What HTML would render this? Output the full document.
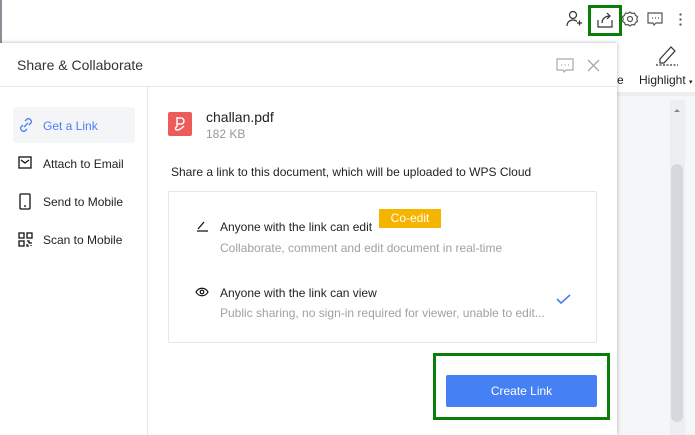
<!DOCTYPE html>
<html><head><style>
*{margin:0;padding:0;box-sizing:border-box}
body{width:695px;height:435px;overflow:hidden;background:#fff;font-family:"Liberation Sans",sans-serif;position:relative;color:#222}
.a{position:absolute}
.t{font-size:12px;white-space:nowrap}
</style></head><body>
<div class="a" style="left:0;top:0;width:695px;height:43px;background:#fff"></div>
<div class="a" style="left:617px;top:96px;width:78px;height:339px;background:#f5f6f8"></div>
<div class="a" style="left:617px;top:92px;width:78px;height:4px;background:#eceef1"></div>
<div class="a" style="left:670px;top:100px;width:15px;height:335px;background:#eceef1"></div>
<div class="a" style="left:671px;top:164px;width:12px;height:258px;background:#d6d8de;border-radius:6px"></div>
<div class="a" style="left:674px;top:109px;width:0;height:0;border-left:3px solid transparent;border-right:3px solid transparent;border-bottom:3px solid #889"></div>
<!-- toolbar icons -->
<svg class="a" style="left:564px;top:9px" width="20" height="20" viewBox="0 0 20 20" fill="none" stroke="#333" stroke-width="1.2"><circle cx="9" cy="6" r="3.5"/><path d="M3 17c0-4 3-6 6-6 1.5 0 3 .5 4 1.5M13 14h5M15.5 11.5v5"/></svg>
<div class="a" style="left:588px;top:5px;width:34px;height:31px;border:3px solid #0a7d0a"></div>
<svg class="a" style="left:594px;top:9px" width="22" height="22" viewBox="0 0 22 22" fill="none" stroke="#333" stroke-width="1.2"><path d="M4 11v7h14v-7M8 14c0-4 3-7 8-7M13 4l3 3-3 3"/></svg>
<svg class="a" style="left:621px;top:10px" width="18" height="18" viewBox="0 0 18 18" fill="none" stroke="#555" stroke-width="1.2"><circle cx="9" cy="9" r="2.5"/><path d="M9 2l2 1.5 2.5-.5 1 2.3 2 1.4-.7 2.3.7 2.3-2 1.4-1 2.3-2.5-.5L9 16l-2-1.5-2.5.5-1-2.3-2-1.4.7-2.3-.7-2.3 2-1.4 1-2.3 2.5.5z"/></svg>
<svg class="a" style="left:646px;top:11px" width="18" height="16" viewBox="0 0 18 16" fill="none" stroke="#555" stroke-width="1.2"><path d="M2 2h14v10h-6l-2 2-1-2H2z"/><path d="M6 7h1M9 7h1M12 7h1"/></svg>
<div class="a" style="left:679px;top:12px;width:3px;height:14px;background:radial-gradient(circle,#555 1px,transparent 1.3px) 0 0/3px 5px"></div>
<svg class="a" style="left:654px;top:43px" width="26" height="24" viewBox="0 0 26 24" fill="none" stroke="#333" stroke-width="1.2"><path d="M6 16l11-12 4 4-11 12H6z"/><path d="M2 22h22" stroke-dasharray="2 1.5"/></svg>
<div class="a t" style="left:639px;top:73px;font-size:12px;color:#222">Highlight <span style="font-size:7px">▾</span></div>
<div class="a t" style="left:617px;top:73px">e</div>
<div class="a" style="left:0;top:0;width:2px;height:435px;background:#8a8f98"></div>
<!-- dialog -->
<div class="a" style="left:0;top:43px;width:617px;height:392px;background:#fff;box-shadow:0 0 4px rgba(0,0,0,.3)"></div>
<div class="a t" style="left:17px;top:57px;font-size:14px;color:#333">Share &amp; Collaborate</div>
<svg class="a" style="left:555px;top:57px" width="20" height="18" viewBox="0 0 20 18" fill="none" stroke="#aaa" stroke-width="1.2"><path d="M2 2h16v11h-7l-2 2-1-2H2z"/><path d="M6 8h1M9.5 8h1M13 8h1"/></svg>
<svg class="a" style="left:587px;top:59px" width="13" height="13" viewBox="0 0 13 13" stroke="#aaa" stroke-width="1.3"><path d="M1 1l11 11M12 1L1 12"/></svg>
<div class="a" style="left:0;top:86px;width:617px;height:1px;background:#e8e8ec"></div>
<div class="a" style="left:147px;top:87px;width:1px;height:348px;background:#e8e8ec"></div>
<div class="a" style="left:13px;top:107px;width:122px;height:36px;background:#f4f5f7;border-radius:3px"></div>
<svg class="a" style="left:18px;top:117px" width="16" height="16" viewBox="0 0 16 16" fill="none" stroke="#4a7ef5" stroke-width="1.3"><path d="M7 4l2-2a3 3 0 014 4l-2 2M9 12l-2 2a3 3 0 01-4-4l2-2M6 10l4-4"/></svg>
<div class="a t" style="left:43px;top:119px;color:#4a7ef5">Get a Link</div>
<svg class="a" style="left:18px;top:156px" width="14" height="13" viewBox="0 0 14 13" fill="none" stroke="#111" stroke-width="1.3"><rect x="1" y="1" width="12" height="11"/><path d="M3 4l4 3 4-3"/></svg>
<div class="a t" style="left:43px;top:157px">Attach to Email</div>
<svg class="a" style="left:19px;top:193px" width="12" height="17" viewBox="0 0 12 17" fill="none" stroke="#111" stroke-width="1.3"><rect x="1" y="1" width="10" height="15" rx="1"/><path d="M5 13h2"/></svg>
<div class="a t" style="left:43px;top:195px">Send to Mobile</div>
<svg class="a" style="left:18px;top:232px" width="15" height="15" viewBox="0 0 15 15" fill="none" stroke="#111" stroke-width="1.3"><rect x="1" y="1" width="5" height="5"/><rect x="9" y="1" width="5" height="5"/><rect x="1" y="9" width="5" height="5"/><path d="M9 9h2v2h3M9 12v2h2M13 13v1"/></svg>
<div class="a t" style="left:43px;top:233px">Scan to Mobile</div>
<div class="a" style="left:168px;top:112px;width:24px;height:24px;background:#ee5b5b;border-radius:2px"></div>
<svg class="a" style="left:172px;top:115px" width="16" height="18" viewBox="0 0 16 18" fill="none" stroke="#fff" stroke-width="1.4"><path d="M5 2v10M5 3h4a3 3 0 010 6H5M5 12c-2 0-2 3 0 3s5-2 7-4"/></svg>
<div class="a t" style="left:206px;top:109px;font-size:14px;color:#222">challan.pdf</div>
<div class="a t" style="left:206px;top:127px;color:#999">182 KB</div>
<div class="a t" style="left:171px;top:165px;color:#222">Share a link to this document, which will be uploaded to WPS Cloud</div>
<div class="a" style="left:168px;top:191px;width:429px;height:152px;border:1px solid #e5e7eb;border-radius:2px"></div>
<svg class="a" style="left:196px;top:220px" width="13" height="12" viewBox="0 0 13 12" fill="none" stroke="#111" stroke-width="1.3"><path d="M2 9l6-7M1 11h11"/></svg>
<div class="a t" style="left:220px;top:220px">Anyone with the link can edit</div>
<div class="a t" style="left:379px;top:209px;width:62px;height:19px;background:#f5b400;color:#fff;text-align:center;line-height:19px">Co-edit</div>
<div class="a t" style="left:220px;top:241px;color:#a0a0a8">Collaborate, comment and edit document in real-time</div>
<svg class="a" style="left:195px;top:287px" width="14" height="10" viewBox="0 0 14 10" fill="none" stroke="#111" stroke-width="1.2"><path d="M1 5c3-5 9-5 12 0-3 5-9 5-12 0z"/><circle cx="7" cy="5" r="1.8"/></svg>
<div class="a t" style="left:220px;top:286px">Anyone with the link can view</div>
<div class="a t" style="left:220px;top:306px;color:#a0a0a8">Public sharing, no sign-in required for viewer, unable to edit...</div>
<svg class="a" style="left:556px;top:293px" width="16" height="12" viewBox="0 0 16 12" fill="none" stroke="#4a7ef5" stroke-width="1.6"><path d="M1 6l4 4 9-8"/></svg>
<div class="a" style="left:433px;top:353px;width:177px;height:67px;border:3px solid #0a7d0a"></div>
<div class="a t" style="left:446px;top:375px;width:151px;height:32px;background:#4580f4;border-radius:2px;color:#fff;text-align:center;line-height:32px">Create Link</div>
</body></html>
